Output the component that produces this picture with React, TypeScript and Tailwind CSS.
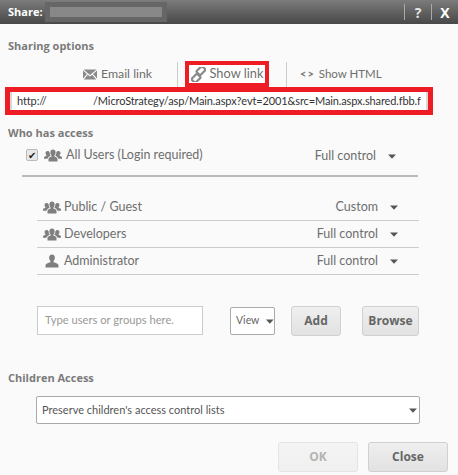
import React from 'react';

const FONT = "font-['Open_Sans',sans-serif]";
const LATO = "font-['Lato',sans-serif]";

const Caret = ({ className = '' }: { className?: string }) => (
  <svg width="8" height="5" viewBox="0 0 8 5" className={className}>
    <path d="M0 0.500h8L4 4.800z" fill="#555" />
  </svg>
);

const GroupIcon = () => (
  <svg width="18" height="13" viewBox="0 0 18 13" fill="#7f7f7f">
    <path d="M9 0.500c1.700 0 2.600 1.300 2.600 3 0 1.300-.5 2.300-1.200 3v1c1.800.6 3.100 1.300 3.100 2.500v2.500H4.500V10c0-1.200 1.300-1.900 3.100-2.500v-1c-.7-.7-1.200-1.700-1.200-3 0-1.700.9-3 2.600-3z" />
    <path d="M3.700 2c1 0 1.800.7 2 1.600-.1 1.300.3 2.400 1 3.200-1.500.5-2.800 1.500-3.200 3H0V8.600c0-.9 1-1.400 2.400-1.900V6C1.900 5.500 1.500 4.700 1.500 3.900 1.500 2.800 2.400 2 3.700 2z" />
    <path d="M14.300 2c-1 0-1.800.7-2 1.600.1 1.300-.3 2.400-1 3.200 1.500.5 2.800 1.500 3.200 3H18V8.600c0-.9-1-1.400-2.400-1.900V6c.5-.5.900-1.300.9-2.100C16.500 2.800 15.600 2 14.300 2z" />
  </svg>
);

const UserIcon = () => (
  <svg width="14" height="14" viewBox="0 0 14 14" fill="#7f7f7f">
    <path d="M7 0.500c1.900 0 2.900 1.400 2.900 3.200 0 1.400-.6 2.500-1.300 3.200v1.300c2.400.7 4.900 1.500 4.900 3v2.300H.5v-2.300c0-1.500 2.500-2.300 4.900-3V6.900C4.700 6.200 4.100 5.100 4.100 3.700 4.100 1.900 5.100.5 7 .5z" />
  </svg>
);

const MailIcon = () => (
  <svg width="14" height="11" viewBox="0 0 14 11" fill="#8a8a8a">
    <path d="M0.500 0.500h13L7 6z" />
    <path d="M0 1.500l4 3.500-4 4.500zM14 1.500l-4 3.500 4 4.500z" />
    <path d="M0.800 10.500L4.800 5.800 7 7.500l2.200-1.700 4 4.700z" />
  </svg>
);

const LinkIcon = () => (
  <svg width="15" height="15" viewBox="0 0 15 15" fill="none" stroke="#8a8a8a" strokeWidth="2.200">
    <rect x="7.200" y="-0.300" width="5.500" height="8" rx="1" transform="rotate(45 10 3.700)" />
    <rect x="2.300" y="7.300" width="5.500" height="8" rx="1" transform="rotate(45 5 11.300)" />
  </svg>
);

const Tab = ({ icon, label, className = 'text-[12.300px]' }: { icon: React.ReactNode; label: string; className?: string }) => (
  <span className={`flex items-center gap-[4px] text-[#6e6e6e] ${LATO} ${className}`}>
    {icon}
    {label}
  </span>
);

const rows = [
  { name: 'Public / Guest', level: 'Custom', icon: <GroupIcon /> },
  { name: 'Developers', level: 'Full control', icon: <GroupIcon /> },
  { name: 'Administrator', level: 'Full control', icon: <span className="mx-[2px] flex"><UserIcon /></span> },
];

const Button = ({ children, className = '' }: { children: React.ReactNode; className?: string }) => (
  <button className={`rounded-[3px] border border-[#d0d0d0] bg-gradient-to-b from-[#efefef] to-[#e2e2e2] text-[12px] font-bold text-[#666] ${className}`}>
    {children}
  </button>
);

export default function App() {
  return (
    <div className={`h-[475px] w-[458px] overflow-hidden bg-[#fafafa] ${FONT}`}>
      <div className="flex h-[24px] items-center bg-gradient-to-b from-[#7c7c7c] to-[#484848] pl-[8px] text-white">
        <span className="text-[11px] font-bold">Share:</span>
        <div className="ml-[2px] flex h-[20px] w-[122px] items-center justify-center bg-[#666]">
          <div className="h-[10px] w-[112px] bg-[#888]" />
        </div>
        <div className="ml-auto flex items-center">
          <span className="h-[16px] w-px bg-[#aaa]" />
          <span className="w-[26px] text-center text-[14px] font-bold text-[#e6e6e6]">?</span>
          <span className="h-[16px] w-px bg-[#aaa]" />
          <span className="w-[26px] text-center text-[14px] font-bold">X</span>
        </div>
      </div>

      <div className="pl-[8px] pt-[14px] text-[11px] font-bold leading-[16px] text-[#7a7a7a]">Sharing options</div>

      <div className="mt-[7px] flex h-[26px] items-center">
        <div className="ml-[83px] w-[94px]">
          <Tab icon={<MailIcon />} label="Email link" />
        </div>
        <span className="h-[25px] w-px bg-[#ccc]" />
        <div className="ml-[7px] flex h-[26px] w-[84px] items-center justify-center border-4 border-[#ee1c25] bg-white">
          <Tab className="text-[12.800px]" icon={<LinkIcon />} label="Show link" />
        </div>
        <span className="ml-[17px] h-[25px] w-px bg-[#ccc]" />
        <div className="ml-[13px]">
          <Tab
            className="text-[11.500px]"
            icon={<span className="text-[11px] font-bold tracking-[1px] text-[#777]">&lt;&gt;</span>}
            label="Show HTML"
          />
        </div>
      </div>

      <div className="ml-[5px] flex h-[28px] w-[428px] items-center border-[5px] border-[#ee1c25] bg-white">
        <div className={`flex h-full w-full items-center overflow-hidden whitespace-pre border-x-2 border-[#d8d8d8] pl-[5px] text-[11px] tracking-[-0.120px] text-[#333] ${LATO}`}>
          <span className="w-[76px]">http://</span>
          <span>/MicroStrategy/asp/Main.aspx?evt=2001&amp;src=Main.aspx.shared.fbb.f</span>
        </div>
      </div>

      <div className="pl-[8px] pt-[10px] text-[11px] font-bold leading-[16px] text-[#7a7a7a]">Who has access</div>

      <div className={`ml-[22px] mt-[6px] flex h-[30px] w-[396px] items-start border-b-2 border-[#bbb] pl-[4px] text-[12.500px] text-[#6e6e6e] ${LATO}`}>
        <span className="mt-[2px] flex h-[12px] w-[12px] items-center justify-center rounded-[2px] border border-[#bbb] bg-[#e8e8e8] text-[10px] leading-none text-[#222]">✔</span>
        <span className="ml-[6px] mt-[2px] flex"><GroupIcon /></span>
        <span className="ml-[4px] leading-[16px]">All Users (Login required)</span>
        <span className="ml-auto leading-[18px]">Full control</span>
        <Caret className="ml-[12px] mr-[22px] mt-[7px]" />
      </div>

      <div className={`ml-[37px] mt-[17px] w-[382px] text-[12.500px] text-[#6e6e6e] ${LATO}`}>
        {rows.map((row) => (
          <div key={row.name} className="flex h-[27px] items-center border-b border-[#ccc] pl-[6px]">
            {row.icon}
            <span className="ml-[3px]">{row.name}</span>
            <span className="ml-auto">{row.level}</span>
            <Caret className="ml-[12px] mr-[21px]" />
          </div>
        ))}
      </div>

      <div className="ml-[37px] mt-[31px] flex items-start">
        <div className={`flex h-[29px] w-[166px] items-center border border-[#ccc] bg-white pl-[7px] text-[11.200px] text-[#999] ${LATO}`}>
          Type users or groups here.
        </div>
        <div className={`ml-[27px] mt-px flex h-[28px] w-[45px] items-center rounded-[2px] border border-[#aaa] bg-white pl-[5px] text-[10.500px] text-[#666] ${LATO}`}>
          View
          <Caret className="ml-[7px]" />
        </div>
        <Button className="ml-[16px] h-[30px] w-[50px]">Add</Button>
        <Button className="ml-[21px] h-[30px] w-[57px]">Browse</Button>
      </div>

      <div className="pl-[8px] pt-[34px] text-[11px] font-bold leading-[16px] text-[#7a7a7a]">Children Access</div>

      <div className={`ml-[36px] mt-[10px] flex h-[28px] w-[384px] items-center justify-between rounded-[2px] border border-[#aaa] bg-white pl-[5px] pr-[2px] text-[11px] text-[#555] ${LATO}`}>
        Preserve children's access control lists
        <Caret />
      </div>

      <div className="mr-[10px] mt-[18px] flex justify-end gap-[10px]">
        <Button className="h-[30px] w-[80px] !border-[#e4e4e4] !from-[#f4f4f4] !to-[#f0f0f0] !text-[#b4b4b4]">OK</Button>
        <Button className="h-[30px] w-[80px]">Close</Button>
      </div>
    </div>
  );
}
